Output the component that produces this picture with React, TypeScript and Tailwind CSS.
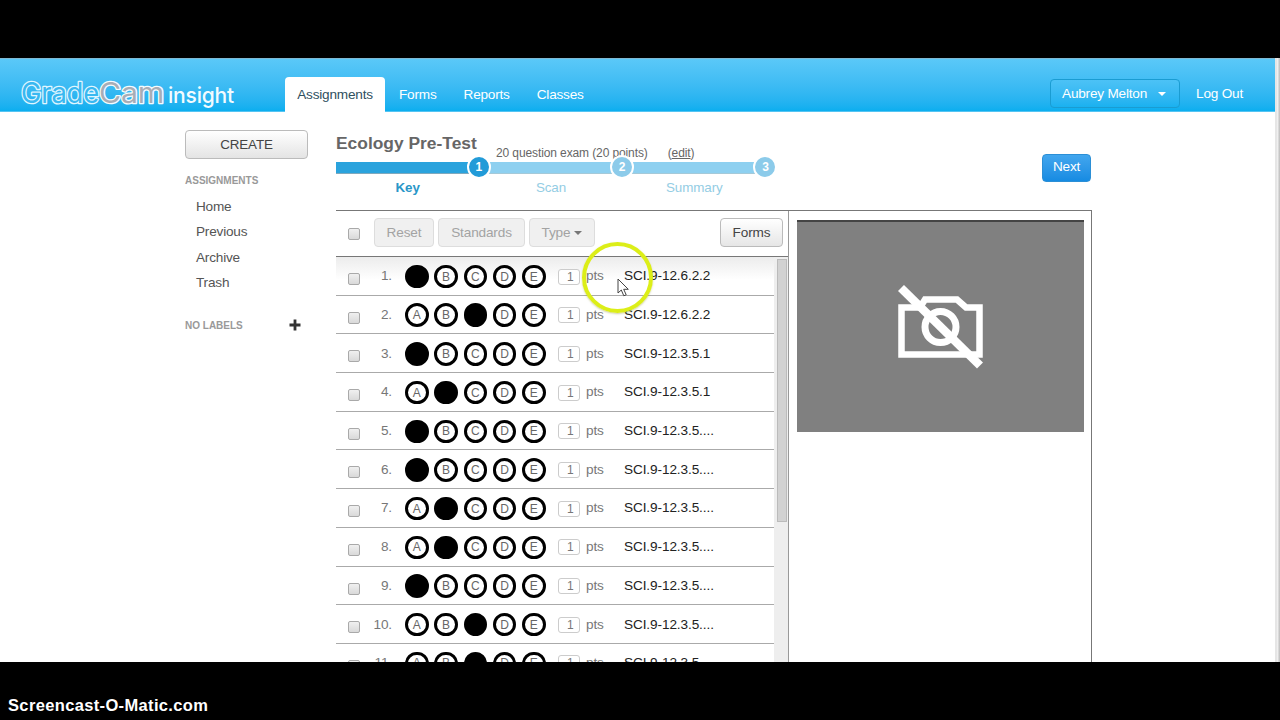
import clsx from 'clsx';

const NAV = ['Forms', 'Reports', 'Classes'];
const FOLDERS = ['Home', 'Previous', 'Archive', 'Trash'];
const CHOICES = ['A', 'B', 'C', 'D', 'E'];

const STEPS = [
  { label: 'Key', active: true },
  { label: 'Scan', active: false },
  { label: 'Summary', active: false },
];

const QUESTIONS = [
  { answer: 'A', standard: 'SCI.9-12.6.2.2' },
  { answer: 'C', standard: 'SCI.9-12.6.2.2' },
  { answer: 'A', standard: 'SCI.9-12.3.5.1' },
  { answer: 'B', standard: 'SCI.9-12.3.5.1' },
  { answer: 'A', standard: 'SCI.9-12.3.5....' },
  { answer: 'A', standard: 'SCI.9-12.3.5....' },
  { answer: 'B', standard: 'SCI.9-12.3.5....' },
  { answer: 'B', standard: 'SCI.9-12.3.5....' },
  { answer: 'A', standard: 'SCI.9-12.3.5....' },
  { answer: 'C', standard: 'SCI.9-12.3.5....' },
  { answer: 'C', standard: 'SCI.9-12.3.5....' },
];

function Logo() {
  return (
    <svg width="216" height="46" viewBox="0 0 216 46" className="ml-5 mt-[7px] shrink-0" fontFamily="Inter, sans-serif">
      <g fontSize="28" strokeLinejoin="round" style={{ paintOrder: 'stroke' }}>
        <text x="1" y="37" textLength="78" lengthAdjust="spacingAndGlyphs" fill="#3ab8f0" stroke="#e0f6ff" strokeWidth="2.6">Grade</text>
        <text x="79" y="37" textLength="65" lengthAdjust="spacingAndGlyphs" fill="#a8adb6" stroke="#f3fbff" strokeWidth="2.6">Cam</text>
      </g>
      <text x="148" y="37" fontSize="22" fontWeight="500" textLength="66" lengthAdjust="spacingAndGlyphs" fill="#f2fbff">insight</text>
    </svg>
  );
}

function Caret({ className }: { className?: string }) {
  return (
    <svg width="8" height="4" viewBox="0 0 8 4" className={className}>
      <path d="M0 0h8L4 4z" fill="currentColor" />
    </svg>
  );
}

function Header() {
  return (
    <header className="flex h-[54px] w-[1275px] shrink-0 border-b border-t border-b-[#55c4f2] border-t-[#7fb9d3] bg-linear-to-b from-[#5ac8f8] to-[#0aaeef] text-[13.6px] tracking-[-0.2px] text-white">
      <Logo />
      <nav className="ml-[49px] mt-[18px] flex h-[35px] leading-[35px]">
        <span className="w-[100px] rounded-t bg-white text-center text-[#2f4f5e]">Assignments</span>
        <div className="ml-[14px] flex gap-[27px]">
          {NAV.map((item) => (
            <span key={item}>{item}</span>
          ))}
        </div>
      </nav>
      <div className="ml-auto mr-[32px] mt-5 flex items-start leading-[30px]">
        <span className="flex h-[29px] w-[130px] items-center rounded border border-[#1a9cd2] bg-linear-to-b from-[#4cc2f6] to-[#19b1f0] pl-[11px] pt-px">
          Aubrey Melton
          <Caret className="ml-[11px]" />
        </span>
        <span className="ml-4">Log Out</span>
      </div>
    </header>
  );
}

function Sidebar() {
  return (
    <aside className="ml-[185px] w-[123px] shrink-0 pt-[18px]">
      <button className="block h-[29px] w-full rounded border border-[#bbb] bg-linear-to-b from-white to-[#e4e4e4] pt-0.5 text-[13.4px] tracking-[-0.1px] text-[#444]">
        CREATE
      </button>
      <h2 className="mt-[14px] text-[10px] font-bold leading-4 text-[#999]">ASSIGNMENTS</h2>
      <ul className="mt-[5px] pl-[11px] text-[13.6px] leading-[25.6px] tracking-[-0.2px] text-[#555]">
        {FOLDERS.map((folder) => (
          <li key={folder}>{folder}</li>
        ))}
      </ul>
      <div className="mt-[22px] flex items-center justify-between pr-[7px] text-[10px] font-bold leading-4 text-[#999]">
        NO LABELS
        <svg width="12" height="12" viewBox="0 0 12 12" className="-mt-0.5">
          <path d="M6 .5v11M.5 6h11" stroke="#333" strokeWidth="2.8" />
        </svg>
      </div>
    </aside>
  );
}

function Steps() {
  return (
    <ol className="flex w-[430px]">
      {STEPS.map((step, i) => (
        <li key={step.label} className="flex-1">
          <div
            className={clsx(
              'relative h-3 border-b',
              step.active ? 'border-[#7fa9bd] bg-[#2aa3dd]' : 'border-[#a5c9d8] bg-[#8ed0f0]',
            )}
          >
            <span
              className={clsx(
                'absolute -right-[11.5px] -top-[7px] z-10 flex size-[24px] items-center justify-center rounded-full border-2 border-white text-[12px] font-bold text-white',
                step.active ? 'bg-[#229bd8]' : 'bg-[#8ccbea]',
              )}
            >
              {i + 1}
            </span>
          </div>
          <div
            className={clsx(
              'mt-1.5 text-center text-[13.4px] leading-4 tracking-[-0.1px]',
              step.active ? 'font-bold text-[#2a97c8]' : 'text-[#94cde4]',
            )}
          >
            {step.label}
          </div>
        </li>
      ))}
    </ol>
  );
}

function Checkbox() {
  return <span className="block size-3 shrink-0 rounded-[2px] border border-[#a9a9a9] bg-linear-to-b from-[#f0f0f0] to-[#d9d9d9]" />;
}

function Toolbar() {
  const disabled = 'flex h-[29px] items-center justify-center rounded border border-[#ddd] bg-[#f0f0f0] pt-px text-[#a3a3a3]';
  return (
    <div className="flex h-[46px] shrink-0 items-center border-b border-[#777] pb-[2px] pl-3 pr-[5px] text-[13.6px] tracking-[-0.15px]">
      <div className="mt-[3px]">
        <Checkbox />
      </div>
      <span className={clsx(disabled, 'ml-[14px] w-[60px]')}>Reset</span>
      <span className={clsx(disabled, 'ml-1 w-[87px]')}>Standards</span>
      <span className={clsx(disabled, 'ml-1 w-[66px]')}>
        Type
        <Caret className="ml-1 text-[#777]" />
      </span>
      <span className="ml-auto flex h-[29px] w-[63px] items-center justify-center rounded border border-[#bbb] bg-linear-to-b from-white to-[#e6e6e6] pt-px text-[#444]">
        Forms
      </span>
    </div>
  );
}

function QuestionRow({ number, answer, standard }: { number: number; answer: string; standard: string }) {
  return (
    <li
      className={clsx(
        'flex h-[38.7px] items-center border-b border-[#aaa] pl-3 pt-[1.4px] text-[13.6px] tracking-[-0.15px] text-[#777]',
        number === 1 && 'bg-linear-to-b from-[#ececec] to-white to-60%',
      )}
    >
      <div className="mt-[5px]">
        <Checkbox />
      </div>
      <span className="w-[32px] text-right">{number}.</span>
      <div className="ml-[13px] flex gap-[5.75px]">
        {CHOICES.map((choice) => (
          <span
            key={choice}
            className={clsx(
              'flex size-[23.5px] items-center justify-center rounded-full border-3 border-black text-[12px]',
              choice === answer ? 'bg-black text-black' : 'bg-white text-[#666]',
            )}
          >
            {choice !== answer && choice}
          </span>
        ))}
      </div>
      <span className="ml-3 h-4 w-[22px] rounded-[3px] border border-[#ccc] bg-white pr-[5px] text-right text-[12px] leading-[15px]">1</span>
      <span className="ml-[6.5px] w-[38px]">pts</span>
      <span className="tracking-[-0.1px] text-[#222]">{standard}</span>
    </li>
  );
}

function CameraOff() {
  return (
    <svg width="86" height="84" viewBox="0 0 86 84" fill="none" stroke="#fff" className="ml-px">
      <path d="M3.5 22.5H22L27 14.5h32l9 8H81.5V69.5H3.5Z" strokeWidth="6.5" />
      <circle cx="42.5" cy="42" r="15.5" strokeWidth="7" />
      <path d="M3 3L82 80.5" strokeWidth="8.5" />
    </svg>
  );
}

function PointerHighlight() {
  return (
    <div className="pointer-events-none absolute left-[582px] top-[242px] z-20 size-[71px] rounded-full border-4 border-[#dcee18] shadow-[0_1px_2px_rgba(160,160,60,0.5)]">
      <svg width="13" height="19" viewBox="0 0 13 19" className="absolute left-[31px] top-[31.5px]">
        <path d="M1 1v14l3.3-3 2.5 5.8 2.4-1-2.5-5.5h4.6z" fill="#fff" stroke="#444" strokeWidth="1" />
      </svg>
    </div>
  );
}

export default function App() {
  return (
    <div className="relative flex h-[720px] w-[1280px] flex-col overflow-hidden bg-black pt-[57.5px] font-['Liberation_Sans',Arial,sans-serif]">
      <div className="flex h-[604.5px] overflow-hidden bg-white">
        <div className="flex w-[1275px] flex-col">
          <Header />
          <div className="flex min-h-0 flex-1">
            <Sidebar />
            <main className="ml-7 flex w-[756px] flex-col">
              <div className="flex h-[98.5px] shrink-0 items-start justify-between">
                <div className="pt-[21.5px]">
                  <div className="flex h-[29px] items-start">
                    <h1 className="w-[160px] text-[17.4px] font-bold leading-5 text-[#666]">Ecology Pre-Test</h1>
                    <p className="mt-[12px] text-[12px] leading-4 tracking-[-0.11px] text-[#666]">
                      20 question exam (20 points)
                      <span className="ml-5">
                        (<u>edit</u>)
                      </span>
                    </p>
                  </div>
                  <Steps />
                </div>
                <button className="mr-[1px] mt-[42px] h-[28px] w-[49px] rounded border border-[#2b8fd6] bg-linear-to-b from-[#41a6ee] to-[#158be2] text-[13.6px] tracking-[-0.2px] text-white">
                  Next
                </button>
              </div>
              <div className="flex min-h-0 flex-1 border-r border-t border-[#777]">
                <section className="flex w-[453px] flex-col border-r border-[#999]">
                  <Toolbar />
                  <div className="flex min-h-0 flex-1">
                    <ul className="w-[438px]">
                      {QUESTIONS.map((q, i) => (
                        <QuestionRow key={i} number={i + 1} answer={q.answer} standard={q.standard} />
                      ))}
                    </ul>
                    <div className="flex-1 bg-[#eee] pl-[3px] pr-px pt-0.5">
                      <div className="h-[263px] border border-[#bbb] bg-[#d2d2d2]" />
                    </div>
                  </div>
                </section>
                <section className="pl-2 pt-[9px]">
                  <div className="flex h-[212px] w-[287px] items-center justify-center border-t-2 border-[#444] bg-[#808080]">
                    <CameraOff />
                  </div>
                </section>
              </div>
            </main>
          </div>
        </div>
        <div className="flex-1 border-l-2 border-[#e6e6e6] bg-linear-to-r from-[#fafafa] to-[#bbb]" />
      </div>
      <footer className="pl-2 pt-[32px] text-[16.5px] font-bold leading-[22px] tracking-[0.35px] text-white">Screencast-O-Matic.com</footer>
      <PointerHighlight />
    </div>
  );
}
